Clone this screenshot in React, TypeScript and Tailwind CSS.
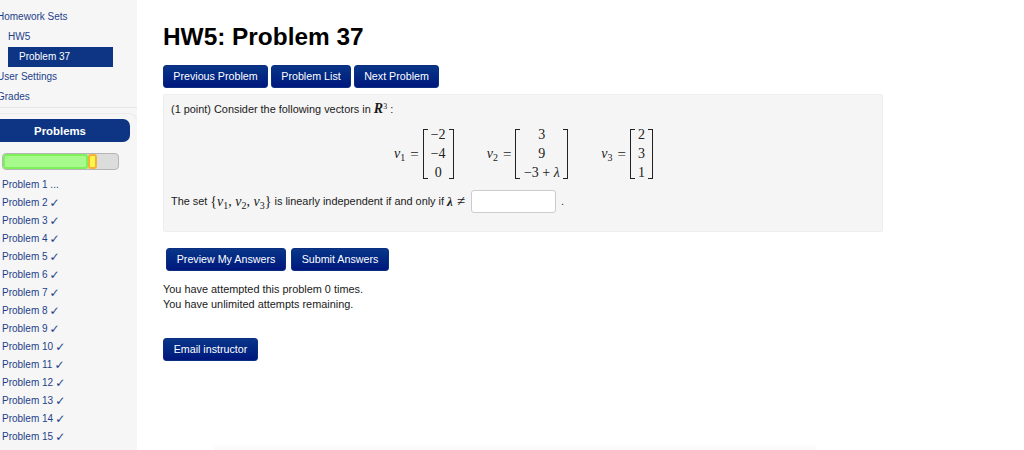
const SANS = "font-['Liberation_Sans',Arial,sans-serif]";
const SERIF = "font-['Liberation_Serif','Times_New_Roman',serif]";

const problems = [
  "Problem 1 ...",
  "Problem 2",
  "Problem 3",
  "Problem 4",
  "Problem 5",
  "Problem 6",
  "Problem 7",
  "Problem 8",
  "Problem 9",
  "Problem 10",
  "Problem 11",
  "Problem 12",
  "Problem 13",
  "Problem 14",
  "Problem 15",
  "Problem 16",
];

function NavButton({ label, width }: { label: string; width: string }) {
  return (
    <button
      className={`${width} h-[23px] shrink-0 rounded-[3px] border border-[#0b2f80] bg-gradient-to-b from-[#0a3587] to-[#00167e] text-center text-[10.7px] leading-[21px] text-white`}
    >
      {label}
    </button>
  );
}

function Vec({ n }: { n: number }) {
  return (
    <span className={`${SERIF} text-[14px] leading-none text-[#222]`}>
      <i>v</i>
      <sub className="text-[10px]">{n}</sub>
    </span>
  );
}

function Matrix({ name, rows, width }: { name: number; rows: React.ReactNode[]; width: string }) {
  return (
    <div className="flex items-center">
      <Vec n={name} />
      <span className={`${SERIF} ml-[5px] mr-[4px] text-[15px] text-[#222]`}>=</span>
      <div className={`${width} relative flex h-[50px] flex-col justify-between ${SERIF} text-[14px] leading-[12px] text-[#222]`}>
        <div className="absolute inset-y-0 left-0 w-[5px] border-y border-l border-[#222]" />
        <div className="absolute inset-y-0 right-0 w-[5px] border-y border-r border-[#222]" />
        {rows.map((row, i) => (
          <div key={i} className="text-center">
            {row}
          </div>
        ))}
      </div>
    </div>
  );
}

export default function App() {
  return (
    <div className={`flex h-[450px] w-[1024px] overflow-hidden bg-white ${SANS}`}>
      {/* Left nav */}
      <aside className="h-[450px] w-[137px] shrink-0 overflow-hidden bg-[#f6f6f6] text-[10px] text-[#1d3f8a]">
        <div className="-ml-[3px] -mt-[13px] flex flex-col">
          <div className="h-[20px] leading-[20px] opacity-30">Courses</div>
          <div className="h-[20px] leading-[20px]">Homework Sets</div>
          <div className="ml-[11px] h-[20px] leading-[20px]">HW5</div>
          <div className="ml-[11px] h-[20px] w-[105px] bg-[#0d3583] pl-[11px] leading-[20px] text-white">Problem 37</div>
          <div className="h-[20px] leading-[20px]">User Settings</div>
          <div className="h-[20px] leading-[20px]">Grades</div>
        </div>
        <div className="border-t border-[#e6e6e6]" />
        <div className="mt-[5px] h-[8px] rounded-tr-[8px] border-r border-t border-[#ececec]" />
        <div className="-mt-[2px] h-[23px] w-[130px] rounded-r-[7px] bg-[#0d3583] pr-[10px] text-center text-[11.4px] font-bold leading-[24px] text-white">
          Problems
        </div>
        <div className="ml-[2px] mt-[11px] flex h-[17px] w-[117px] overflow-hidden rounded-[4px] border border-[#b5b5b5] bg-[#dcdcdc]">
          <div className="w-[85px] rounded-[3px] border-2 border-[#7ef05a] bg-[#a6fb8c]" />
          <div className="w-[9px] rounded-[3px] border-2 border-[#f5b335] bg-[#fdf64a]" />
        </div>
        <div className="ml-[2px] mt-[6px] flex flex-col">
          {problems.map((p, i) => (
            <div key={p} className="flex h-[18px] items-center whitespace-nowrap leading-[18px]">
              {p}
              {i > 0 && <span className="ml-[2px] font-['DejaVu_Sans',sans-serif] text-[12px] leading-none">✓</span>}
            </div>
          ))}
        </div>
      </aside>

      {/* Problem page */}
      <main className="flex-1 pl-[26px] pt-[23px] text-[10.9px] text-[#1a1a1a]">
        <h1 className="h-[27px] text-[24.4px] font-bold leading-[27px] text-black">HW5: Problem 37</h1>

        <div className="mt-[15px] flex gap-[3px]">
          <NavButton label="Previous Problem" width="w-[105px]" />
          <NavButton label="Problem List" width="w-[80px]" />
          <NavButton label="Next Problem" width="w-[85px]" />
        </div>

        <div className="mt-[6px] h-[138px] w-[720px] rounded-[2px] border border-[#eeeeee] bg-[#f5f5f5] pl-[7px] pt-[7px]">
          <div className="flex h-[14px] items-center leading-[14px]">
            (1 point) Consider the following vectors in&nbsp;
            <span className={`${SERIF} text-[14px] font-bold italic`}>
              R<sup className="text-[8px] font-normal not-italic">3</sup>
            </span>
            &nbsp;:
          </div>

          <div className="mt-[13px] flex justify-center gap-[33px] pr-[6px]">
            <Matrix name={1} width="w-[31px]" rows={["−2", "−4", "0"]} />
            <Matrix
              name={2}
              width="w-[53px]"
              rows={[
                "3",
                "9",
                <span key="l">
                  −3 + <i>λ</i>
                </span>,
              ]}
            />
            <Matrix name={3} width="w-[23px]" rows={["2", "3", "1"]} />
          </div>

          <div className="mt-[11px] flex h-[23px] items-center">
            <span>The set&nbsp;</span>
            <span className={`${SERIF} text-[14px] text-[#222]`}>
              {"{"}
              <i>v</i>
              <sub className="text-[10px]">1</sub>, <i>v</i>
              <sub className="text-[10px]">2</sub>, <i>v</i>
              <sub className="text-[10px]">3</sub>
              {"}"}
            </span>
            <span>&nbsp;is linearly independent if and only if&nbsp;</span>
            <span className={`${SERIF} text-[13px] font-bold italic`}>λ</span>
            <span className={`${SERIF} ml-[4px] text-[15px]`}>≠</span>
            <div className="ml-[6px] h-[23px] w-[85px] shrink-0 rounded-[3px] border border-[#cccccc] bg-white" />
            <span className="ml-[5px]">.</span>
          </div>
        </div>

        <div className="ml-[3px] mt-[16px] flex gap-[5px]">
          <NavButton label="Preview My Answers" width="w-[120px]" />
          <NavButton label="Submit Answers" width="w-[98px]" />
        </div>

        <div className="mt-[11px] leading-[15px]">
          <div>You have attempted this problem 0 times.</div>
          <div>You have unlimited attempts remaining.</div>
        </div>

        <div className="mt-[26px]">
          <NavButton label="Email instructor" width="w-[95px]" />
        </div>

        {/* faint shadow of the next panel at the fold */}
        <div className="ml-[51px] mt-[82px] h-[7px] w-[602px] rounded-t-[6px] bg-gradient-to-b from-white to-[#f9f9f9]" />
      </main>
    </div>
  );
}
